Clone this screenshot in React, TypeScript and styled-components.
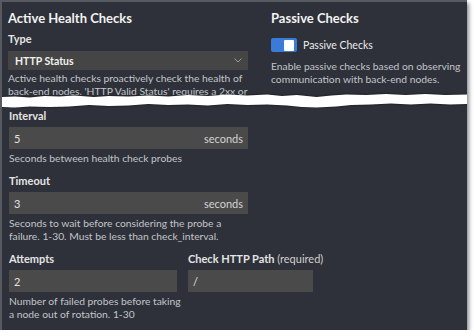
import styled, { createGlobalStyle } from "styled-components";

const GlobalStyle = createGlobalStyle`
	html, body {
		margin: 0;
		padding: 0;
		background: #ffffff;
	}
	body {
		font-family: Lato, "Noto Sans", sans-serif;
		-webkit-font-smoothing: antialiased;
	}
`;

const Panel = styled.div`
	width: 465px;
	height: 328px;
	background: #2e3139;
	border-left: 2px solid #575a61;
	border-top: 2px solid #575a61;
	box-shadow: 2px 3px 4px rgba(0, 0, 0, 0.45);
	overflow: hidden;
	display: flex;
	flex-direction: column;
	& > * {
		flex-shrink: 0;
	}
`;

const TopPiece = styled.div`
	height: 106px;
	overflow: hidden;
	display: grid;
	grid-template-columns: 240px 198px;
	column-gap: 23px;
	padding: 8px 0 0 6px;
	box-sizing: border-box;
`;

const BottomPiece = styled.div`
	padding: 1px 0 0 7px;
	display: flex;
	flex-direction: column;
`;

const Column = styled.div`
	display: flex;
	flex-direction: column;
`;

const Title = styled.h2`
	margin: 0;
	font-size: 13px;
	line-height: 16px;
	font-weight: 700;
	color: #f2f2f2;
`;

const Label = styled.div`
	font-size: 11px;
	line-height: 13px;
	font-weight: 700;
	color: #e4e4e4;
	white-space: nowrap;
	span {
		font-weight: 400;
		color: #d0d0d0;
	}
`;

const Help = styled.div<{ $width?: number; $gap?: number }>`
	font-size: 10.3px;
	line-height: 13px;
	color: #c2c5ca;
	margin-top: ${(p) => p.$gap ?? 3}px;
	width: ${(p) => (p.$width ? `${p.$width}px` : "auto")};
`;

const TypeLabel = styled(Label)`
	margin-top: 6px;
`;

const Select = styled.div`
	margin-top: 6px;
	height: 19px;
	background: #454545;
	display: flex;
	align-items: center;
	justify-content: space-between;
	padding: 0 6px 0 7px;
	font-size: 10.5px;
	font-weight: 700;
	color: #f0f0f0;
`;

const Input = styled.div<{ $width: number }>`
	margin-top: 5px;
	width: ${(p) => p.$width}px;
	height: 22px;
	box-sizing: border-box;
	background: #4a4a4a;
	display: flex;
	align-items: center;
	justify-content: space-between;
	padding: 0 5px;
	font-size: 11px;
	color: #e2e2e2;
`;

const Unit = styled.span`
	color: #d4d4d4;
`;

const Field = styled.div`
	display: flex;
	flex-direction: column;
	margin-bottom: 9px;
`;

const Row = styled.div`
	display: grid;
	grid-template-columns: 168px 125px;
	column-gap: 11px;
`;

const ToggleRow = styled.div`
	display: flex;
	align-items: center;
	gap: 6px;
	margin-top: 12px;
	font-size: 10.5px;
	color: #ececec;
`;

const Switch = styled.div`
	width: 26px;
	height: 14px;
	border-radius: 2px;
	background: #3a7bd8;
	display: flex;
	align-items: center;
	justify-content: flex-end;
	padding-right: 3px;
	box-sizing: border-box;
`;

const Knob = styled.div`
	width: 10px;
	height: 11px;
	border-radius: 1px;
	background: #ffffff;
`;

const TearSvg = styled.svg`
	display: block;
	margin: -20px 0 0 -2px;
	position: relative;
	z-index: 1;
`;

const topEdge = [
	[0, 9], [15, 8.5], [30, 9.5], [45, 8], [60, 8.5], [75, 7.5], [95, 9], [110, 8],
	[130, 8.5], [150, 7.5], [170, 8.5], [190, 7], [210, 8], [230, 6.5], [250, 7.5], [270, 6.5],
	[285, 8], [300, 7], [320, 9], [335, 7.5], [350, 6.5], [370, 7], [390, 6],
	[410, 7], [430, 6], [450, 7], [474, 6.5],
];
const bottomEdge = [
	[474, 16], [455, 16.5], [435, 15.5], [415, 16.5], [395, 15.5], [375, 16.5], [355, 17],
	[340, 18.5], [320, 19.5], [305, 19], [290, 17.5], [270, 16.5], [250, 17], [230, 16],
	[210, 17.5], [190, 16.5], [170, 17], [150, 16], [130, 17.5], [110, 18], [90, 17],
	[70, 18.5], [50, 19], [30, 18.5], [15, 19.5], [0, 19],
];
const band = [...topEdge, ...bottomEdge].map((p) => p.join(",")).join(" ");
const below = [...bottomEdge, [0, 20], [474, 20]].map((p) => p.join(",")).join(" ");

function Tear() {
	return (
		<TearSvg width="469" height="20" viewBox="0 0 474 20" preserveAspectRatio="none">
			<defs>
				<filter id="tearShadow" x="-5%" y="-50%" width="110%" height="200%">
					<feGaussianBlur stdDeviation="1.2" />
				</filter>
			</defs>
			<polygon points={below} fill="#2e3139" />
			<polygon points={band} fill="#0d0d0f" opacity="0.7" filter="url(#tearShadow)" />
			<polygon points={band} fill="#ffffff" />
		</TearSvg>
	);
}

function Chevron() {
	return (
		<svg width="8" height="5" viewBox="0 0 8 5">
			<path d="M0.5 0.5 L4 4 L7.5 0.5" fill="none" stroke="#9a9a9a" strokeWidth="1" />
		</svg>
	);
}

export default function App() {
	return (
		<>
			<GlobalStyle />
			<Panel>
				<TopPiece>
					<Column>
						<Title>Active Health Checks</Title>
						<TypeLabel>Type</TypeLabel>
						<Select>
							HTTP Status
							<Chevron />
						</Select>
						<Help $gap={2}>
							Active health checks proactively check the health of back-end nodes. 'HTTP
							Valid Status' requires a 2xx or 3xx response.
						</Help>
					</Column>
					<Column>
						<Title>Passive Checks</Title>
						<ToggleRow>
							<Switch>
								<Knob />
							</Switch>
							Passive Checks
						</ToggleRow>
						<Help $gap={8}>
							Enable passive checks based on observing communication with back-end nodes.
						</Help>
					</Column>
				</TopPiece>
				<Tear />
				<BottomPiece>
					<Field>
						<Label>Interval</Label>
						<Input $width={239}>
							5<Unit>seconds</Unit>
						</Input>
						<Help>Seconds between health check probes</Help>
					</Field>
					<Field>
						<Label>Timeout</Label>
						<Input $width={239}>
							3<Unit>seconds</Unit>
						</Input>
						<Help $width={239}>
							Seconds to wait before considering the probe a failure. 1-30. Must be less than
							check_interval.
						</Help>
					</Field>
					<Row>
						<Field>
							<Label>Attempts</Label>
							<Input $width={168}>2</Input>
							<Help $width={176}>Number of failed probes before taking a node out of rotation. 1-30</Help>
						</Field>
						<Field>
							<Label>
								Check HTTP Path <span>(required)</span>
							</Label>
							<Input $width={125}>/</Input>
						</Field>
					</Row>
				</BottomPiece>
			</Panel>
		</>
	);
}
